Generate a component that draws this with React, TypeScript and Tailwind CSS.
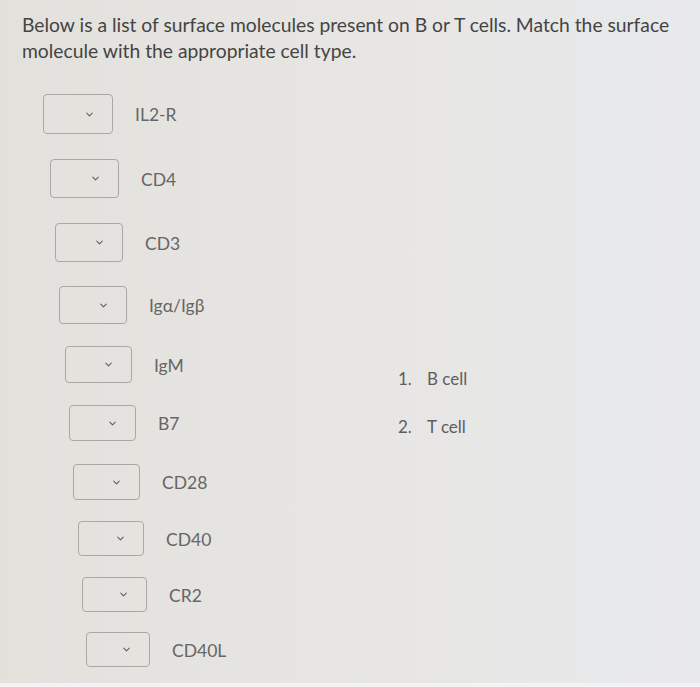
import { ChevronDown } from 'lucide-react';

// rows drift right and shrink a little, like the photo
const rows = [
  { label: 'IL2-R', cls: 'ml-[43px] mt-[0px]', box: 'w-[70px] h-[40px]' },
  { label: 'CD4', cls: 'ml-[50px] mt-[25px]', box: 'w-[69px] h-[39px]' },
  { label: 'CD3', cls: 'ml-[55px] mt-[25px]', box: 'w-[68px] h-[39px]' },
  { label: 'Igα/Igβ', cls: 'ml-[59px] mt-[24px]', box: 'w-[68px] h-[38px]' },
  { label: 'IgM', cls: 'ml-[65px] mt-[22px]', box: 'w-[67px] h-[37px]' },
  { label: 'B7', cls: 'ml-[69px] mt-[22px]', box: 'w-[67px] h-[36px]' },
  { label: 'CD28', cls: 'ml-[73px] mt-[23px]', box: 'w-[67px] h-[36px]' },
  { label: 'CD40', cls: 'ml-[78px] mt-[21px]', box: 'w-[66px] h-[35px]' },
  { label: 'CR2', cls: 'ml-[82px] mt-[21px]', box: 'w-[65px] h-[35px]' },
  { label: 'CD40L', cls: 'ml-[86px] mt-[20px]', box: 'w-[64px] h-[35px]' },
];

export default function App() {
  return (
    <div className="w-[700px] h-[687px] overflow-hidden bg-gradient-to-r from-[#e3e1dc] via-[#e7e6e3] to-[#e8e9ec] font-['Lato','Noto_Sans',sans-serif] flex flex-col">
      <div className="flex-1">
        <p className="pl-[22px] pr-1 pt-[12px] text-[19.3px] leading-[26px] text-[#444]">
          Below is a list of surface molecules present on B or T cells. Match the surface molecule with the appropriate cell type.
        </p>

        <div className="flex mt-[30px]">
          <div className="w-[398px] flex flex-col">
            {rows.map((r) => (
              <div key={r.label} className={`flex items-center ${r.cls}`}>
                <div className={`${r.box} border border-[#a8a8a6] rounded-[4px] flex items-center justify-end pr-[17px]`}>
                  <ChevronDown size={11} strokeWidth={2.2} className="text-[#5c5c5c]" />
                </div>
                <span className="ml-[22px] pt-[3px] text-[17.5px] text-[#666]">{r.label}</span>
              </div>
            ))}
          </div>

          <ol className="mt-[272px] flex flex-col gap-[22px] text-[17px] text-[#5e5e5e]">
            <li><span className="inline-block w-[29px]">1.</span>B cell</li>
            <li><span className="inline-block w-[29px]">2.</span>T cell</li>
          </ol>
        </div>
      </div>
      <div className="h-[4px] bg-[#f3f3f3]" />
    </div>
  );
}
